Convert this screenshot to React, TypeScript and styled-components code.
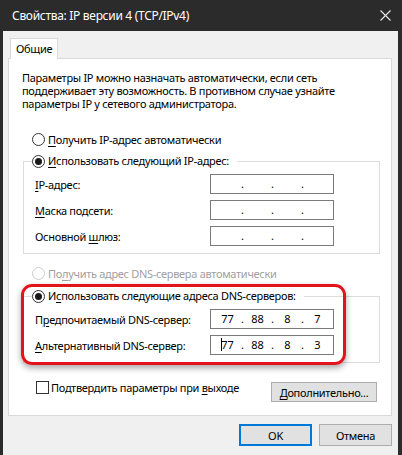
import React from "react";
import styled, { createGlobalStyle } from "styled-components";

const Global = createGlobalStyle`
  html, body { margin: 0; padding: 0; background: #2b2b2b; }
  body {
    font-family: "Noto Sans", "Open Sans", sans-serif;
    font-size: 11px;
    letter-spacing: -0.3px;
    color: #000;
  }
  * { box-sizing: border-box; }
`;

const Window = styled.div`
  width: 402px;
  height: 455px;
  display: flex;
  flex-direction: column;
  background: #2b2b2b;
  padding: 0 4px 0 3px;
  overflow: hidden;
`;

const TitleBar = styled.div`
  height: 31px;
  flex: none;
  display: flex;
  align-items: center;
  justify-content: space-between;
  padding: 0 7px 0 9px;
  color: #ffffff;
  font-size: 12px;
`;

const TitleText = styled.span`
  white-space: nowrap;
`;

const CloseIcon = styled.svg`
  width: 11px;
  height: 11px;
  display: block;
`;

const Body = styled.div`
  flex: 1;
  background: #f0f0f0;
  padding: 7px 6px 0 5px;
`;

const TabStrip = styled.div`
  display: flex;
  padding-left: 2px;
`;

const Tab = styled.div`
  position: relative;
  z-index: 1;
  height: 21px;
  margin-bottom: -1px;
  padding: 0 5px 1px;
  display: flex;
  align-items: center;
  background: #ffffff;
  border: 1px solid #d9d9d9;
  border-bottom: none;
`;

const Panel = styled.div`
  background: #ffffff;
  border: 1px solid #d9d9d9;
  padding: 12px 11px 13px 13px;
`;

const Description = styled.p`
  margin: 0;
  line-height: 13px;
  white-space: nowrap;
`;

const Key = styled.u`
  text-decoration: underline;
  text-decoration-thickness: 1px;
  text-underline-offset: 2px;
`;

const RadioRow = styled.div<{ $top?: number; $disabled?: boolean }>`
  display: flex;
  align-items: center;
  gap: 3px;
  height: 14px;
  margin-top: ${(p) => p.$top ?? 0}px;
  margin-left: ${(p) => (p.$top !== undefined ? 10 : 0)}px;
  color: ${(p) => (p.$disabled ? "#a0a0a0" : "#000")};
  white-space: nowrap;
`;

const RadioCircle = styled.span<{ $checked?: boolean; $disabled?: boolean }>`
  width: 13px;
  height: 13px;
  flex: none;
  border-radius: 50%;
  border: 1px solid ${(p) => (p.$disabled ? "#cccccc" : "#333333")};
  background: #ffffff;
  display: flex;
  align-items: center;
  justify-content: center;
  &::after {
    content: "";
    width: 7px;
    height: 7px;
    border-radius: 50%;
    background: ${(p) => (p.$checked ? "#1a1a1a" : "transparent")};
  }
`;

const GroupBox = styled.fieldset<{ $top: number }>`
  margin: ${(p) => p.$top}px 0 0 1px;
  width: 357px;
  min-inline-size: 0;
  border: 1px solid #dcdcdc;
  padding: 6px 0 7px 0;
  display: flex;
  flex-direction: column;
  gap: 6px;
`;

const Legend = styled.legend`
  margin-left: 8px;
  padding: 0 8px 0 0;
  line-height: 14px;
`;

const FieldRow = styled.div`
  display: flex;
  align-items: center;
  height: 20px;
  padding-left: 11px;
`;

const FieldLabel = styled.span`
  width: 175px;
  flex: none;
  white-space: nowrap;
`;

const IpBox = styled.div`
  width: 124px;
  height: 20px;
  border: 1px solid #7a7a7a;
  background: #ffffff;
  display: flex;
  align-items: center;
  padding-left: 3px;
  letter-spacing: 0;
`;

const Segment = styled.span`
  width: 27px;
  text-align: center;
  line-height: 14px;
`;

const Dot = styled.span`
  width: 3px;
  text-align: center;
  line-height: 14px;
`;

const Caret = styled.span`
  display: inline-block;
  width: 1px;
  height: 13px;
  margin-right: -1px;
  background: #000;
  vertical-align: -2px;
`;

const HighlightWrap = styled.div<{ $top: number }>`
  position: relative;
  margin-top: ${(p) => p.$top}px;
`;

const Highlight = styled.div`
  position: absolute;
  left: -1px;
  top: -5px;
  width: 325px;
  height: 81px;
  border: 3px solid #e3131b;
  border-radius: 11px;
  box-shadow: 0 3px 6px rgba(0, 0, 0, 0.35);
  pointer-events: none;
`;

const CheckRow = styled.div`
  display: flex;
  justify-content: space-between;
  align-items: flex-start;
  margin-top: 19px;
`;

const CheckLabel = styled.label`
  display: flex;
  align-items: center;
  gap: 2px;
  height: 14px;
  margin: -2px 0 0 14px;
  white-space: nowrap;
`;

const CheckBox = styled.span`
  width: 13px;
  height: 13px;
  border: 1px solid #333333;
  background: #ffffff;
  flex: none;
`;

const Button = styled.button<{ $default?: boolean; $width: number; $height: number }>`
  width: ${(p) => p.$width}px;
  height: ${(p) => p.$height}px;
  margin: 0;
  padding: 0;
  font: inherit;
  letter-spacing: inherit;
  color: #000;
  background: #e1e1e1;
  border: ${(p) => (p.$default ? "2px solid #0078d7" : "1px solid #adadad")};
  display: flex;
  align-items: center;
  justify-content: center;
`;

const MoreButton = styled(Button)`
  margin-right: 3px;
`;

const DialogButtons = styled.div`
  display: flex;
  justify-content: flex-end;
  gap: 7px;
  margin-top: 8px;
`;

type IpProps = { values?: string[]; caret?: boolean };

const IpField: React.FC<IpProps> = ({ values = ["", "", "", ""], caret }) => (
  <IpBox>
    {values.map((v, i) => (
      <React.Fragment key={i}>
        {i > 0 && <Dot>.</Dot>}
        <Segment>
          {i === 0 && caret && <Caret />}
          {v}
        </Segment>
      </React.Fragment>
    ))}
  </IpBox>
);

export default function App() {
  return (
    <>
      <Global />
      <Window>
        <TitleBar>
          <TitleText>Свойства: IP версии 4 (TCP/IPv4)</TitleText>
          <CloseIcon viewBox="0 0 11 11">
            <path d="M0.5 0.5 L10.5 10.5 M10.5 0.5 L0.5 10.5" stroke="#e8e8e8" strokeWidth="1.1" />
          </CloseIcon>
        </TitleBar>
        <Body>
          <TabStrip>
            <Tab>Общие</Tab>
          </TabStrip>
          <Panel>
            <Description>
              Параметры IP можно назначать автоматически, если сеть
              <br />
              поддерживает эту возможность. В противном случае узнайте
              <br />
              параметры IP у сетевого администратора.
            </Description>

            <RadioRow $top={22}>
              <RadioCircle />
              <span>
                <Key>П</Key>олучить IP-адрес автоматически
              </span>
            </RadioRow>

            <GroupBox $top={8}>
              <Legend>
                <RadioRow>
                  <RadioCircle $checked />
                  <span>
                    <Key>И</Key>спользовать следующий IP-адрес:
                  </span>
                </RadioRow>
              </Legend>
              <FieldRow>
                <FieldLabel>
                  <Key>I</Key>P-адрес:
                </FieldLabel>
                <IpField />
              </FieldRow>
              <FieldRow>
                <FieldLabel>
                  <Key>М</Key>аска подсети:
                </FieldLabel>
                <IpField />
              </FieldRow>
              <FieldRow>
                <FieldLabel>
                  Основной <Key>ш</Key>люз:
                </FieldLabel>
                <IpField />
              </FieldRow>
            </GroupBox>

            <RadioRow $top={12} $disabled>
              <RadioCircle $disabled />
              <span>
                По<Key>л</Key>учить адрес DNS-сервера автоматически
              </span>
            </RadioRow>

            <HighlightWrap $top={9}>
              <GroupBox $top={0}>
                <Legend>
                  <RadioRow>
                    <RadioCircle $checked />
                    <span>
                      И<Key>с</Key>пользовать следующие адреса DNS-серверов:
                    </span>
                  </RadioRow>
                </Legend>
                <FieldRow>
                  <FieldLabel>
                    П<Key>р</Key>едпочитаемый DNS-сервер:
                  </FieldLabel>
                  <IpField values={["77", "88", "8", "7"]} />
                </FieldRow>
                <FieldRow>
                  <FieldLabel>
                    <Key>А</Key>льтернативный DNS-сервер:
                  </FieldLabel>
                  <IpField values={["77", "88", "8", "3"]} caret />
                </FieldRow>
              </GroupBox>
              <Highlight />
            </HighlightWrap>

            <CheckRow>
              <CheckLabel>
                <CheckBox />
                <span>
                  Подтвердить параметры при <Key>в</Key>ыходе
                </span>
              </CheckLabel>
              <MoreButton $width={106} $height={20}>
                <span>
                  <Key>Д</Key>ополнительно...
                </span>
              </MoreButton>
            </CheckRow>
          </Panel>
          <DialogButtons>
            <Button $default $width={73} $height={22}>
              OK
            </Button>
            <Button $width={73} $height={22}>
              Отмена
            </Button>
          </DialogButtons>
        </Body>
      </Window>
    </>
  );
}
